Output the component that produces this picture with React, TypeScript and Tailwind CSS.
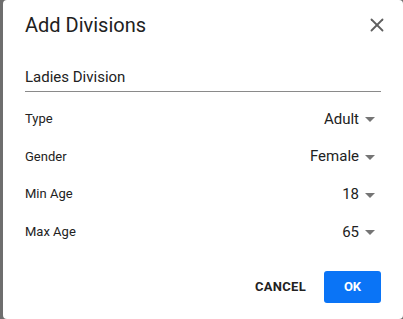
import { X } from "lucide-react";

type Field = { label: string; value: string };

const fields: Field[] = [
  { label: "Type", value: "Adult" },
  { label: "Gender", value: "Female" },
  { label: "Min Age", value: "18" },
  { label: "Max Age", value: "65" },
];

function Caret() {
  return (
    <svg width="10" height="5" viewBox="0 0 10 5" className="ml-[6px] mt-[2px]">
      <path d="M0 0 L10 0 L5 5 Z" fill="#757575" />
    </svg>
  );
}

export default function App() {
  return (
    <div className="flex h-[319px] w-[403px] bg-[#6e6e6e] font-['Roboto',sans-serif] overflow-hidden">
      <div className="ml-[3px] flex-1 rounded-[4px] bg-white pl-[22px] pr-[22px] pt-[12px]">
        <div className="flex items-center justify-between">
          <h2 className="text-[20px] leading-[26px] text-[#212121]">Add Divisions</h2>
          <X className="mr-[-7px] h-[22px] w-[22px] text-[#5f5f5f]" strokeWidth={2} />
        </div>

        <div className="mt-[29px] border-b border-[#8a8a8a] pb-[4px] text-[15px] leading-[20px] text-[#222]">
          Ladies Division
        </div>

        <div className="mt-[8px] flex flex-col">
          {fields.map((f) => (
            <div key={f.label} className="flex h-[37.7px] items-center justify-between">
              <span className="text-[13px] text-[#222]">{f.label}</span>
              <span className="mr-[6px] flex items-center text-[15px] text-[#222]">
                {f.value}
                <Caret />
              </span>
            </div>
          ))}
        </div>

        <div className="mt-[20px] flex items-center justify-end gap-[14px]">
          <button className="px-[4px] text-[13px] font-bold tracking-[0.3px] text-[#222]">
            CANCEL
          </button>
          <button className="h-[32px] w-[57px] rounded-[3px] bg-[#0a74f6] text-[13px] font-bold text-white">
            OK
          </button>
        </div>
      </div>
    </div>
  );
}
